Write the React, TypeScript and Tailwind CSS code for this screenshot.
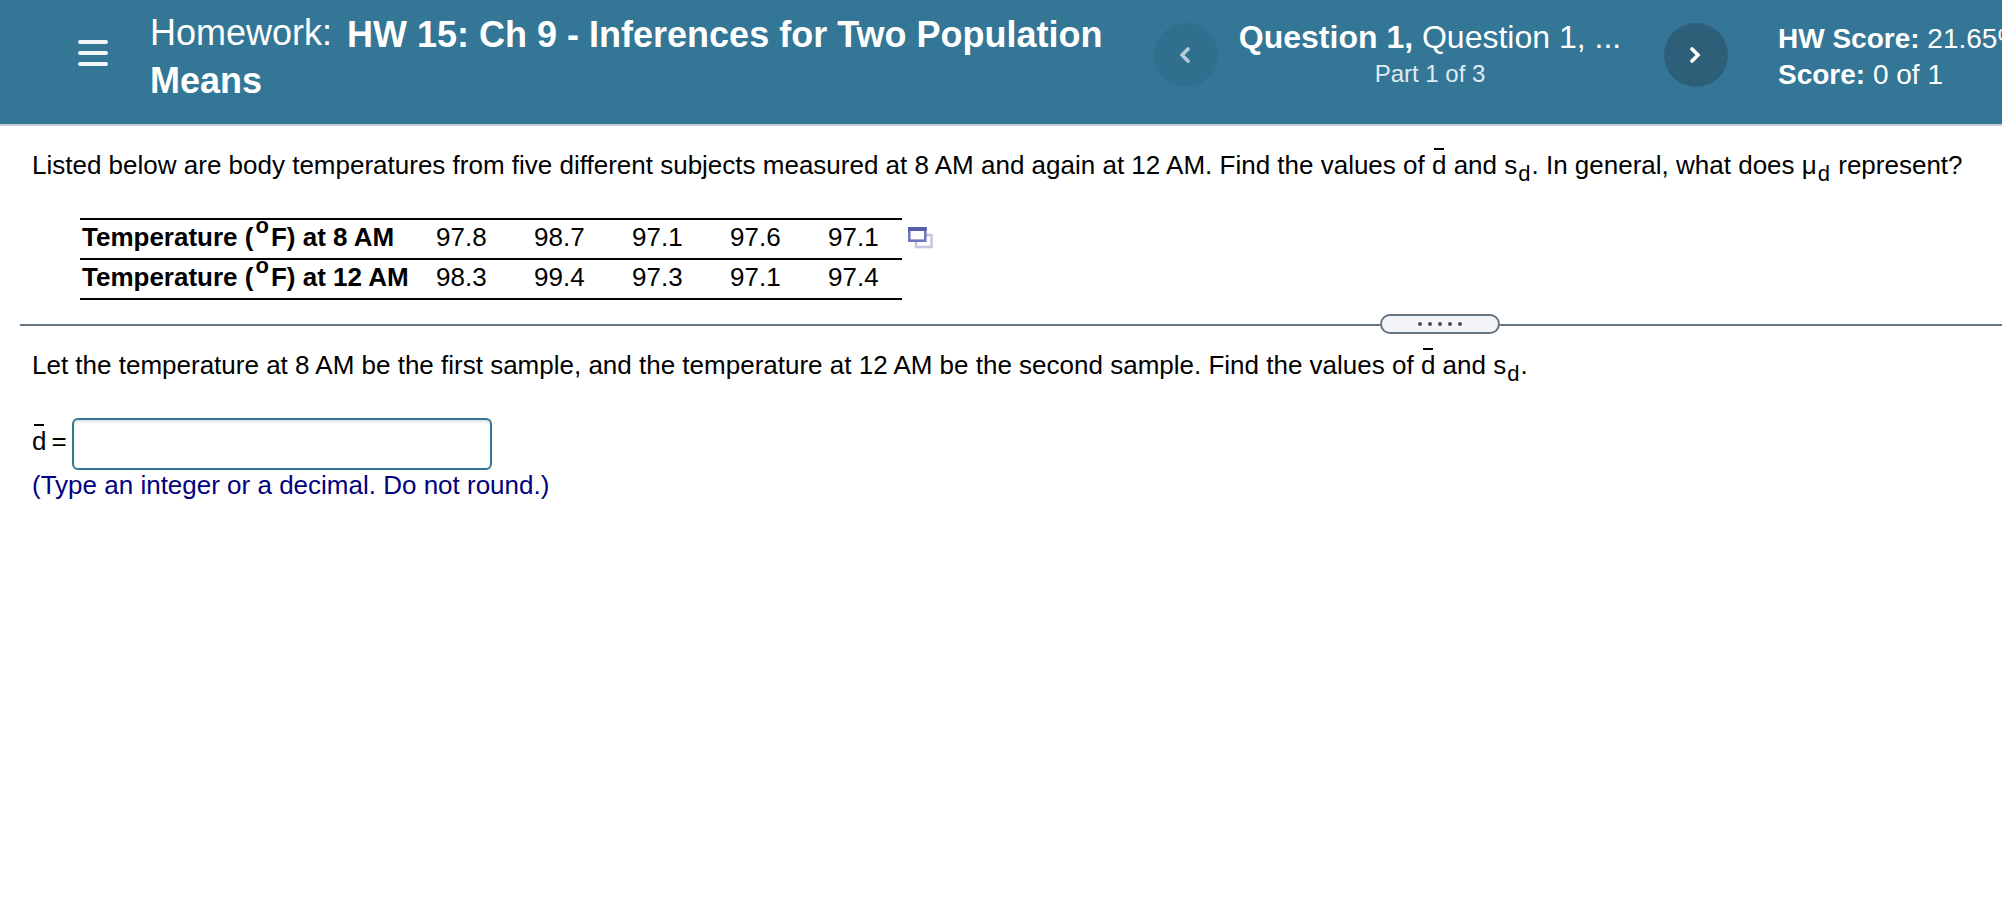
import type { ReactNode } from "react";

const rows = [
  { time: "8 AM", values: ["97.8", "98.7", "97.1", "97.6", "97.1"] },
  { time: "12 AM", values: ["98.3", "99.4", "97.3", "97.1", "97.4"] },
];

function DBar() {
  return (
    <span className="relative inline-block">
      d
      <span className="absolute top-[-2px] left-[2px] h-[2px] w-[10px] bg-black" />
    </span>
  );
}

function Sub({ children }: { children: ReactNode }) {
  return <sub className="top-[7px] bottom-auto mx-px text-[22px]">{children}</sub>;
}

function Chevron({ flip = false }: { flip?: boolean }) {
  return (
    <svg width="12" height="18" viewBox="0 0 12 18" fill="none" stroke="currentColor" strokeWidth="3.6" strokeLinecap="round" aria-hidden="true">
      <path d={flip ? "M2 3 L8 9 L2 15" : "M8 3 L2 9 L8 15"} />
    </svg>
  );
}

function Header() {
  return (
    <header className="flex h-[126px] items-start border-b-2 border-[#c5ced6] bg-[#337696] text-white">
      <button aria-label="Menu" className="mt-[40px] ml-[78px] shrink-0">
        <svg width="30" height="26" viewBox="0 0 30 26" stroke="#f4f7fa" strokeWidth="4" strokeLinecap="round" aria-hidden="true">
          <path d="M2 2H28M2 13H28M2 24H28" />
        </svg>
      </button>
      <h1 className="mt-[12px] ml-[42px] min-w-0 flex-1 text-[36px] leading-[46px]">
        <span className="mr-[5px] align-[2px] leading-none">Homework:</span> <b>HW 15: Ch 9 - Inferences for Two Population Means</b>
      </h1>
      <nav aria-label="Questions" className="flex shrink-0 items-start">
        <button aria-label="Previous question" disabled className="mt-[23px] flex size-[64px] items-center justify-center rounded-full bg-[#316f8e] text-[#b5cbd7]">
          <Chevron />
        </button>
        <div className="mt-[18px] w-[446px] pr-[22px] text-center">
          <p className="text-[32px] leading-[38px]">
            <b>Question 1,</b> Question 1, ...
          </p>
          <p className="text-[24px] leading-[36px] text-[#e1ebf2]">Part 1 of 3</p>
        </div>
        <button aria-label="Next question" className="mt-[23px] flex size-[64px] items-center justify-center rounded-full bg-[#2d5f79]">
          <Chevron flip />
        </button>
      </nav>
      <div className="mt-[21px] ml-[50px] w-[224px] shrink-0 overflow-hidden text-[28px] leading-[36px] whitespace-nowrap">
        <p>
          <b>HW Score:</b> 21.65%
        </p>
        <p>
          <b>Score:</b> 0 of 1
        </p>
      </div>
    </header>
  );
}

export default function App() {
  return (
    <div className="min-h-screen overflow-x-hidden bg-white font-['Liberation_Sans',Arial,sans-serif] text-[26px] leading-[30px] text-black">
      <Header />
      <main>
        <section className="px-[32px] pt-[24px]">
          <p>
            Listed below are body temperatures from five different subjects measured at 8 AM and again at 12 AM. Find the values of <DBar /> and s<Sub>d</Sub>. In general, what does μ<Sub>d</Sub> represent?
          </p>
          <div className="mt-[38px] ml-[48px] flex items-start">
            <table className="w-[822px] table-fixed border-collapse">
              <tbody>
                {rows.map((row) => (
                  <tr key={row.time} className="h-[40px] border-y-2 border-black">
                    <th scope="row" className="w-[356px] pb-[5px] pl-[2px] text-left whitespace-nowrap">
                      Temperature (<sup className="top-[-13px] mx-[2px] text-[22px]">o</sup>F) at {row.time}
                    </th>
                    {row.values.map((v, i) => (
                      <td key={i} className={i === 4 ? "w-[74px] pb-[5px]" : "w-[98px] pb-[5px]"}>{v}</td>
                    ))}
                  </tr>
                ))}
              </tbody>
            </table>
            <button aria-label="Copy data" className="mt-[9px] ml-[6px]">
              <svg width="26" height="22" viewBox="0 0 26 22" fill="none" aria-hidden="true">
                <rect x="8" y="8" width="15.5" height="12" stroke="#c3c6e2" strokeWidth="2.6" />
                <rect x="1.3" y="1.3" width="16" height="12.4" fill="#fff" stroke="#7078bb" strokeWidth="2.6" />
                <path d="M0 2H18.6" stroke="#5560ad" strokeWidth="4" />
              </svg>
            </button>
          </div>
        </section>

        <div className="mt-[14px] ml-[20px] flex items-center">
          <span className="mt-[2px] h-[2px] flex-1 bg-[#667380]" />
          <button aria-label="Resize panels" className="flex h-[20px] w-[120px] items-center justify-center gap-[6px] rounded-[10px] border-2 border-[#667380] bg-[#f3f5f8]">
            {[0, 1, 2, 3, 4].map((n) => (
              <span key={n} className="size-[4px] rounded-full bg-[#4c5056]" />
            ))}
          </button>
          <span className="mt-[2px] h-[2px] w-[502px] bg-[#667380]" />
        </div>

        <section className="px-[32px] pt-[16px]">
          <p>
            Let the temperature at 8 AM be the first sample, and the temperature at 12 AM be the second sample. Find the values of <DBar /> and s<Sub>d</Sub>.
          </p>
          <div className="mt-[38px] flex items-start gap-[5px]">
            <label htmlFor="dbar" className="mt-[8px] flex gap-[5px]">
              <DBar />
              <span>=</span>
            </label>
            <input id="dbar" type="text" className="h-[52px] w-[420px] rounded-[6px] border-2 border-[#337696] px-[8px] shadow-[inset_0_2px_3px_rgba(0,0,0,0.12)] outline-none" />
          </div>
          <p className="text-[#000080]">(Type an integer or a decimal. Do not round.)</p>
        </section>
      </main>
    </div>
  );
}
